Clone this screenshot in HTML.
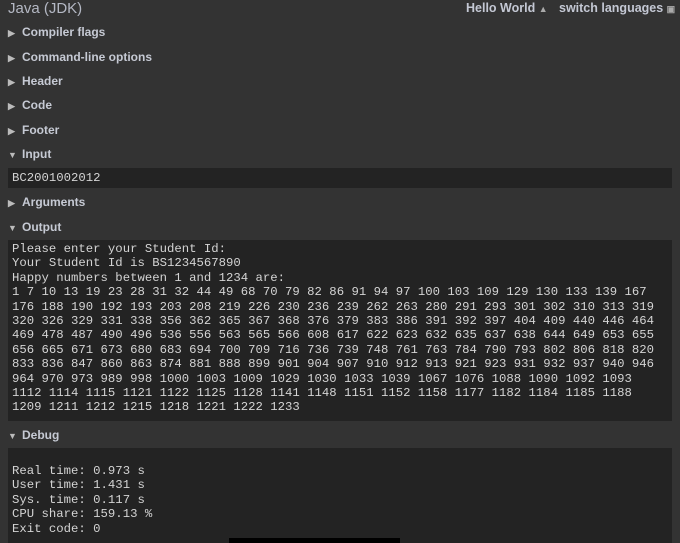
<!DOCTYPE html>
<html><head><meta charset="utf-8"><style>
html,body{margin:0;padding:0;width:680px;height:543px;overflow:hidden;background:#333;}
body{position:relative;font-family:"Liberation Sans",sans-serif;}
.t{position:absolute;left:8px;top:0px;font-size:15px;color:#b4b8c4;}
.top{position:absolute;top:1px;font-size:12.5px;font-weight:bold;color:#c4c8d4;}
.h{position:absolute;left:8px;font-size:12px;font-weight:bold;color:#c6cad4;white-space:nowrap;}
.h span{display:inline-block;width:14px;font-size:9px;color:#bbb;}
.box{position:absolute;left:8px;width:664px;background:#232323;}
pre{margin:0;font-family:"Liberation Mono",monospace;font-size:12.3px;line-height:14.4px;color:#d4d4d4;padding-left:4px;}
</style></head><body>
<div class="t">Java (JDK)</div>
<div class="top" style="left:466px">Hello World <span style="font-size:9px;color:#aaa">&#9650;</span></div>
<div class="top" style="left:559px">switch languages <span style="font-size:9px;color:#aaa">&#9635;</span></div>
<div class="h" style="top:25px"><span>&#9654;</span>Compiler flags</div>
<div class="h" style="top:50px"><span>&#9654;</span>Command-line options</div>
<div class="h" style="top:74px"><span>&#9654;</span>Header</div>
<div class="h" style="top:98px"><span>&#9654;</span>Code</div>
<div class="h" style="top:123px"><span>&#9654;</span>Footer</div>
<div class="h" style="top:147px"><span>&#9660;</span>Input</div>
<div class="box" style="top:168px;height:20px"><pre style="padding-top:3px">BC2001002012</pre></div>
<div class="h" style="top:195px"><span>&#9654;</span>Arguments</div>
<div class="h" style="top:220px"><span>&#9660;</span>Output</div>
<div class="box" style="top:240px;height:181px"><pre style="padding-top:2px">Please enter your Student Id:
Your Student Id is BS1234567890
Happy numbers between 1 and 1234 are:
1 7 10 13 19 23 28 31 32 44 49 68 70 79 82 86 91 94 97 100 103 109 129 130 133 139 167
176 188 190 192 193 203 208 219 226 230 236 239 262 263 280 291 293 301 302 310 313 319
320 326 329 331 338 356 362 365 367 368 376 379 383 386 391 392 397 404 409 440 446 464
469 478 487 490 496 536 556 563 565 566 608 617 622 623 632 635 637 638 644 649 653 655
656 665 671 673 680 683 694 700 709 716 736 739 748 761 763 784 790 793 802 806 818 820
833 836 847 860 863 874 881 888 899 901 904 907 910 912 913 921 923 931 932 937 940 946
964 970 973 989 998 1000 1003 1009 1029 1030 1033 1039 1067 1076 1088 1090 1092 1093
1112 1114 1115 1121 1122 1125 1128 1141 1148 1151 1152 1158 1177 1182 1184 1185 1188
1209 1211 1212 1215 1218 1221 1222 1233</pre></div>
<div class="h" style="top:428px"><span>&#9660;</span>Debug</div>
<div class="box" style="top:448px;height:95px"><pre style="padding-top:16px">
Real time: 0.973 s
User time: 1.431 s
Sys. time: 0.117 s
CPU share: 159.13 %
Exit code: 0</pre></div>
<div style="position:absolute;left:229px;top:538px;width:171px;height:5px;background:#000"></div>
</body></html>
